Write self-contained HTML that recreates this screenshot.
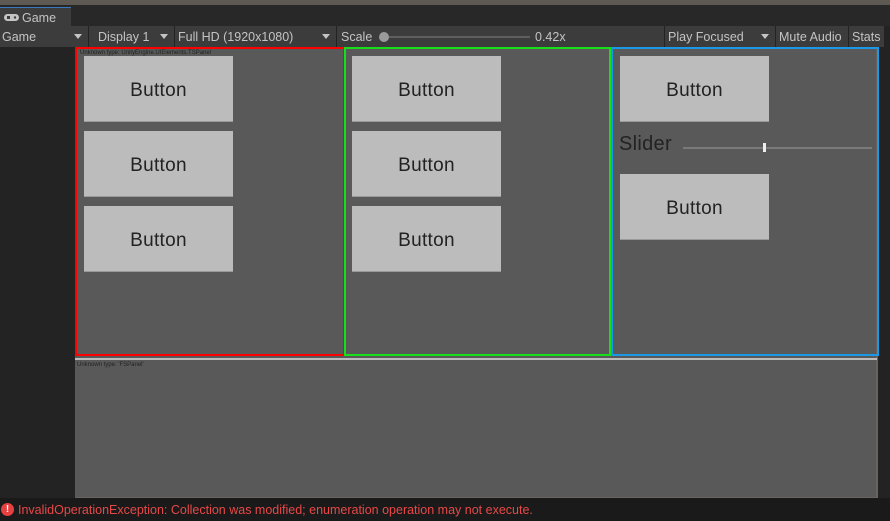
<!DOCTYPE html>
<html><head><style>
*{margin:0;padding:0;box-sizing:border-box}
body{width:890px;height:521px;background:#232323;position:relative;overflow:hidden;font-family:"Liberation Sans",sans-serif;color:#c4c4c4;font-size:12.5px}
.a{position:absolute}
.tb{top:26px;height:21px;background:#3c3c3c;border-right:1px solid #232323;line-height:22px;padding-left:4px}
.arr{position:absolute;right:6px;top:8px;width:0;height:0;border-left:4px solid transparent;border-right:4px solid transparent;border-top:5px solid #c4c4c4}
.btn{position:absolute;width:149px;height:66px;background:#bcbcbc;border-bottom:1px solid #9a9a9a;color:#222;font-size:19px;letter-spacing:0.3px;text-align:center;line-height:69px}
.sm{font-size:6px;color:#222;position:absolute}
</style></head><body>
<div class="a" style="left:0;top:0;width:890px;height:5px;background:#5f5954"></div>
<div class="a" style="left:0;top:5px;width:890px;height:21px;background:#282828"></div>
<div class="a" style="left:0;top:7px;width:71px;height:19px;background:#3c3c3c;border-top:1px solid #3a79bb;line-height:20px;padding-left:22px">Game</div>
<svg class="a" style="left:4px;top:13px" width="15" height="9"><rect x="0" y="1" width="15" height="7" rx="3.5" fill="#c4c4c4"/><rect x="3" y="3" width="3" height="3" fill="#3c3c3c"/><circle cx="11" cy="4.5" r="1.2" fill="#3c3c3c"/></svg>
<div class="a tb" style="left:0;width:89px;padding-left:2px">Game<span class="arr"></span></div>
<div class="a tb" style="left:89px;width:86px;padding-left:9px">Display 1<span class="arr"></span></div>
<div class="a tb" style="left:175px;width:162px;padding-left:3px">Full HD (1920x1080)<span class="arr"></span></div>
<div class="a tb" style="left:337px;width:328px">Scale<span class="a" style="left:43px;top:10px;width:150px;height:2px;background:#5e5e5e"></span><span class="a" style="left:42px;top:6px;width:10px;height:10px;border-radius:5px;background:#9a9a9a"></span><span class="a" style="left:198px">0.42x</span></div>
<div class="a tb" style="left:665px;width:111px;padding-left:3px">Play Focused<span class="arr"></span></div>
<div class="a tb" style="left:776px;width:73px;padding-left:3px">Mute Audio</div>
<div class="a tb" style="left:849px;width:36px;padding-left:3px">Stats</div>

<div class="a" style="left:75px;top:47px;width:803px;height:451px;background:#595959;border-right:2px solid #6b625b;border-bottom:1px solid #6b625b"></div>
<div class="a" style="left:75px;top:47px;width:270px;height:309px;border:2px solid #ff0000"></div>
<div class="a" style="left:344px;top:47px;width:267px;height:309px;border:2px solid #18e018"></div>
<div class="a" style="left:611px;top:47px;width:268px;height:309px;border:2px solid #1a9ae6"></div>
<div class="sm" style="left:80px;top:50px">Unknown type: UnityEngine.UIElements.TSPanel</div>
<div class="btn" style="left:84px;top:56px">Button</div>
<div class="btn" style="left:84px;top:131px">Button</div>
<div class="btn" style="left:84px;top:206px">Button</div>
<div class="btn" style="left:352px;top:56px">Button</div>
<div class="btn" style="left:352px;top:131px">Button</div>
<div class="btn" style="left:352px;top:206px">Button</div>
<div class="btn" style="left:620px;top:56px">Button</div>
<div class="btn" style="left:620px;top:174px">Button</div>
<div class="a" style="left:619px;top:133px;font-size:20px;letter-spacing:0.3px;color:#222">Slider</div>
<div class="a" style="left:683px;top:147px;width:189px;height:2px;background:#7a7a7a"></div>
<div class="a" style="left:763px;top:143px;width:3px;height:9px;background:#eee"></div>
<div class="a" style="left:75px;top:358px;width:802px;height:2px;background:#bcbcbc"></div>
<div class="sm" style="left:77px;top:362px">Unknown type: 'FSPanel'</div>

<div class="a" style="left:0;top:498px;width:890px;height:23px;background:#1a1a1a"></div>
<div class="a" style="left:1px;top:503px;width:13px;height:13px;border-radius:7px;background:#e84040;color:#fff;font-size:10px;font-weight:bold;text-align:center;line-height:13px">!</div>
<div class="a" style="left:18px;top:503px;color:#e84848;font-size:12.5px">InvalidOperationException: Collection was modified; enumeration operation may not execute.</div>
</body></html>
